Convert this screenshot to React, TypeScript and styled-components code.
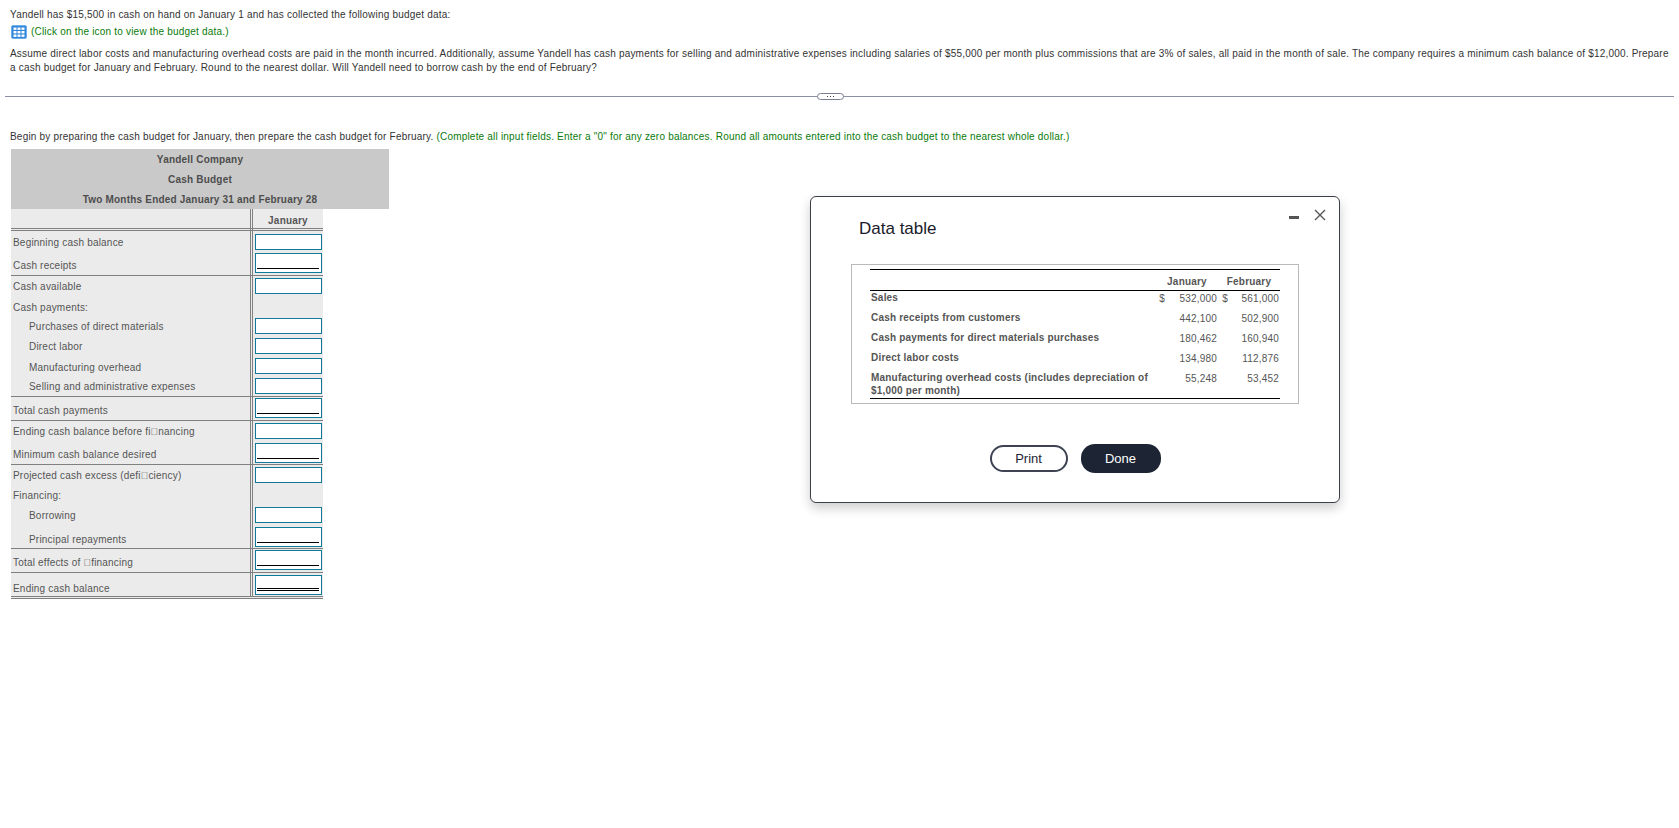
import React from "react";
import styled, { createGlobalStyle } from "styled-components";

const Global = createGlobalStyle`
  html, body { margin: 0; padding: 0; background: #fff; }
  body { font-family: "Liberation Sans", Arial, sans-serif; font-size: 10px; letter-spacing: 0.2px; color: #333; }
`;

const Page = styled.div`
  position: relative;
  width: 1679px;
  height: 828px;
  overflow: hidden;
  padding-top: 8px;
  box-sizing: border-box;
`;

const Para = styled.p<{ $top: number; $color?: string }>`
  margin: ${(p) => p.$top}px 0 0 10px;
  width: 1660px;
  line-height: 14px;
  color: ${(p) => p.$color || "#333"};
`;

const IconLine = styled.div`
  margin: 3px 0 0 11px;
  height: 14px;
  display: flex;
  align-items: center;
  gap: 4px;
  line-height: 14px;
  color: #0a7a0a;
`;

const Divider = styled.div`
  position: relative;
  margin: 21px 5px 0 5px;
  height: 1px;
  background: #8b90a3;
`;

const MoreButton = styled.div`
  position: absolute;
  left: 812px;
  top: -3px;
  width: 27px;
  height: 7px;
  box-sizing: border-box;
  background: #fff;
  border: 1px solid #7a7f92;
  border-radius: 4px;
  display: flex;
  justify-content: center;
  align-items: center;
  gap: 2px;
`;

const MoreDot = styled.span`
  width: 1px;
  height: 1px;
  background: #444;
`;

const Intro = styled.p`
  margin: 33px 0 0 10px;
  line-height: 14px;
  color: #333;
`;

const Green = styled.span`
  color: #0a7a0a;
`;

const Budget = styled.div`
  margin: 5px 0 0 11px;
  width: 378px;
  color: #555;
`;

const TitleBand = styled.div`
  background: #c9c9c9;
  height: 60px;
  width: 378px;
  color: #4d4d4d;
`;

const TitleLine = styled.div`
  height: 20px;
  line-height: 22px;
  text-align: center;
  font-weight: bold;
`;

const Row = styled.div<{ $h: number; $line?: "single" | "double" }>`
  display: grid;
  grid-template-columns: 239px 3px 70px;
  width: 312px;
  height: ${(p) => p.$h}px;
  background: #ebebeb;
  box-sizing: border-box;
  border-bottom: ${(p) =>
    p.$line === "double" ? "3px double #808080" : p.$line === "single" ? "1px solid #808080" : "0"};
`;

const Label = styled.div<{ $indent?: boolean; $top: number }>`
  padding: ${(p) => p.$top}px 0 0 ${(p) => (p.$indent ? 18 : 2)}px;
  line-height: 14px;
  color: #555;
`;

const Rule = styled.div`
  border-left: 3px double #808080;
`;

const HeadCell = styled.div`
  text-align: center;
  font-weight: bold;
  line-height: 23px;
  color: #555;
`;

const InputWrap = styled.div`
  padding: 0 0 0 2px;
`;

const Cell = styled.div<{ $top: number; $h: number; $under?: "single" | "double" }>`
  position: relative;
  margin-top: ${(p) => p.$top}px;
  width: 67px;
  height: ${(p) => p.$h}px;
  box-sizing: border-box;
  background: #fff;
  border: 1px solid #107a9a;
  &::after {
    content: "";
    display: ${(p) => (p.$under ? "block" : "none")};
    position: absolute;
    left: 1px;
    right: 2px;
    bottom: 3px;
    border-bottom: ${(p) => (p.$under === "double" ? "3px double #000" : "1px solid #000")};
  }
`;

const Modal = styled.div`
  position: absolute;
  left: 810px;
  top: 196px;
  width: 530px;
  height: 307px;
  box-sizing: border-box;
  background: #fff;
  border: 1px solid #3b3f46;
  border-radius: 6px;
  box-shadow: 0 5px 12px rgba(0, 0, 0, 0.2);
`;

const ModalTitle = styled.h2`
  margin: 0;
  padding: 22px 0 0 48px;
  height: 67px;
  box-sizing: border-box;
  font-size: 17px;
  font-weight: normal;
  letter-spacing: 0;
  line-height: 20px;
  color: #1a1a2a;
`;

const WindowControls = styled.div`
  position: absolute;
  left: 478px;
  top: 12px;
  display: flex;
  align-items: center;
  gap: 14px;
  color: #555;
`;

const DataBox = styled.div`
  margin-left: 40px;
  width: 448px;
  height: 140px;
  box-sizing: border-box;
  border: 1px solid #b9b9b9;
  padding: 4px 18px 0 18px;
`;

const DataGrid = styled.div`
  border-top: 1px solid #000;
  border-bottom: 1px solid #000;
  display: grid;
  grid-template-columns: 281px 15px 52px 11px 51px;
  grid-template-rows: 21px;
  grid-auto-rows: 20px;
  width: 410px;
  height: 128px;
  color: #555;
`;

const DataHead = styled.div<{ $span: number; $start: number; $pad?: number }>`
  grid-column: ${(p) => `${p.$start} / span ${p.$span}`};
  box-sizing: border-box;
  border-bottom: 1px solid #000;
  padding-left: ${(p) => p.$pad || 0}px;
  font-weight: bold;
  line-height: 24px;
  text-align: center;
`;

const DataLabel = styled.div<{ $wrap?: boolean }>`
  font-weight: bold;
  line-height: 13px;
  padding: 0 0 0 1px;
  width: 280px;
  box-sizing: border-box;
  white-space: ${(p) => (p.$wrap ? "normal" : "nowrap")};
`;

const DataNum = styled.div`
  text-align: right;
  line-height: 13px;
  padding: 1px 1px 0 0;
`;

const ButtonRow = styled.div`
  display: flex;
  justify-content: center;
  align-items: center;
  gap: 13px;
  margin: 40px 0 0 0;
`;

const PrintButton = styled.div`
  width: 78px;
  height: 27px;
  box-sizing: border-box;
  border: 2px solid #3d4352;
  border-radius: 14px;
  text-align: center;
  font-size: 13px;
  letter-spacing: 0;
  line-height: 23px;
  color: #1d2433;
`;

const DoneButton = styled.div`
  width: 80px;
  height: 29px;
  border-radius: 14px;
  background: #1d2433;
  color: #fff;
  text-align: center;
  font-size: 13px;
  letter-spacing: 0;
  line-height: 29px;
`;

type R = {
  label: React.ReactNode;
  indent?: boolean;
  h: number;
  textTop: number;
  line?: "single" | "double";
  input?: { top: number; h: number; under?: "single" | "double" };
};

const T = "\uE000";

const rows: R[] = [
  { label: "Beginning cash balance", h: 21, textTop: 5, input: { top: 3, h: 16 } },
  { label: "Cash receipts", h: 24, textTop: 7, line: "single", input: { top: 1, h: 20, under: "single" } },
  { label: "Cash available", h: 22, textTop: 4, input: { top: 2, h: 16 } },
  { label: "Cash payments:", h: 18, textTop: 3 },
  { label: "Purchases of direct materials", indent: true, h: 20, textTop: 4, input: { top: 2, h: 16 } },
  { label: "Direct labor", indent: true, h: 20, textTop: 4, input: { top: 2, h: 16 } },
  { label: "Manufacturing overhead", indent: true, h: 20, textTop: 5, input: { top: 2, h: 16 } },
  { label: "Selling and administrative expenses", indent: true, h: 21, textTop: 4, line: "single", input: { top: 2, h: 16 } },
  { label: "Total cash payments", h: 24, textTop: 7, line: "single", input: { top: 1, h: 20, under: "single" } },
  { label: `Ending cash balance before fi${T}nancing`, h: 21, textTop: 4, input: { top: 2, h: 16 } },
  { label: "Minimum cash balance desired", h: 23, textTop: 6, line: "single", input: { top: 1, h: 20, under: "single" } },
  { label: `Projected cash excess (defi${T}ciency)`, h: 22, textTop: 4, input: { top: 2, h: 16 } },
  { label: "Financing:", h: 18, textTop: 2 },
  { label: "Borrowing", indent: true, h: 21, textTop: 4, input: { top: 2, h: 16 } },
  { label: "Principal repayments", indent: true, h: 23, textTop: 7, line: "single", input: { top: 1, h: 20, under: "single" } },
  { label: `Total effects of ${T}financing`, h: 24, textTop: 7, line: "single", input: { top: 1, h: 20, under: "single" } },
  { label: "Ending cash balance", h: 26, textTop: 9, line: "double", input: { top: 2, h: 20, under: "double" } },
];

const data = [
  { label: "Sales", a: "532,000", b: "561,000", dollar: true },
  { label: "Cash receipts from customers", a: "442,100", b: "502,900" },
  { label: "Cash payments for direct materials purchases", a: "180,462", b: "160,940" },
  { label: "Direct labor costs", a: "134,980", b: "112,876" },
  { label: "Manufacturing overhead costs (includes depreciation of $1,000 per month)", a: "55,248", b: "53,452", wrap: true },
];

const GridIcon = () => (
  <svg width="16" height="14" viewBox="0 0 16 14">
    <rect x="0.5" y="0.5" width="15" height="13" rx="1.5" fill="#2f86dc" stroke="#6fb0ec" />
    {[2.5, 6, 9.5].map((y) =>
      [2.5, 6.5, 10.5].map((x) => <rect key={`${x}-${y}`} x={x} y={y} width="3" height="2.4" fill="#fff" />)
    )}
  </svg>
);

export default function App() {
  return (
    <Page>
      <Global />
      <Para $top={0}>Yandell has $15,500 in cash on hand on January 1 and has collected the following budget data:</Para>
      <IconLine>
        <GridIcon />
        <span>(Click on the icon to view the budget data.)</span>
      </IconLine>
      <Para $top={8}>
        Assume direct labor costs and manufacturing overhead costs are paid in the month incurred. Additionally, assume
        Yandell has cash payments for selling and administrative expenses including salaries of $55,000 per month plus
        commissions that are 3% of sales, all paid in the month of sale. The company requires a minimum cash balance of
        $12,000. Prepare a cash budget for January and February. Round to the nearest dollar. Will Yandell need to borrow
        cash by the end of February?
      </Para>
      <Divider>
        <MoreButton>
          <MoreDot />
          <MoreDot />
          <MoreDot />
        </MoreButton>
      </Divider>
      <Intro>
        Begin by preparing the cash budget for January, then prepare the cash budget for February.{" "}
        <Green>
          (Complete all input fields. Enter a "0" for any zero balances. Round all amounts entered into the cash budget to
          the nearest whole dollar.)
        </Green>
      </Intro>
      <Budget>
        <TitleBand>
          <TitleLine>Yandell Company</TitleLine>
          <TitleLine>Cash Budget</TitleLine>
          <TitleLine>Two Months Ended January 31 and February 28</TitleLine>
        </TitleBand>
        <Row $h={22} $line="double">
          <div />
          <Rule />
          <HeadCell>January</HeadCell>
        </Row>
        {rows.map((r, i) => (
          <Row key={i} $h={r.h} $line={r.line}>
            <Label $indent={r.indent} $top={r.textTop}>
              {r.label}
            </Label>
            <Rule />
            <InputWrap>{r.input && <Cell $top={r.input.top} $h={r.input.h} $under={r.input.under} />}</InputWrap>
          </Row>
        ))}
      </Budget>
      <Modal>
        <ModalTitle>Data table</ModalTitle>
        <WindowControls>
          <svg width="11" height="12" viewBox="0 0 11 12">
            <rect x="0" y="7" width="10" height="3" fill="#555" />
          </svg>
          <svg width="12" height="12" viewBox="0 0 12 12">
            <path d="M1 1 L11 11 M11 1 L1 11" stroke="#555" strokeWidth="1.4" fill="none" />
          </svg>
        </WindowControls>
        <DataBox>
          <DataGrid>
            <DataHead $start={1} $span={1} />
            <DataHead $start={2} $span={2} $pad={5}>
              January
            </DataHead>
            <DataHead $start={4} $span={2}>
              February
            </DataHead>
            {data.map((d) => (
              <React.Fragment key={d.label}>
                <DataLabel $wrap={d.wrap}>{d.label}</DataLabel>
                <DataNum>{d.dollar ? "$" : ""}</DataNum>
                <DataNum>{d.a}</DataNum>
                <DataNum>{d.dollar ? "$" : ""}</DataNum>
                <DataNum>{d.b}</DataNum>
              </React.Fragment>
            ))}
          </DataGrid>
        </DataBox>
        <ButtonRow>
          <PrintButton>Print</PrintButton>
          <DoneButton>Done</DoneButton>
        </ButtonRow>
      </Modal>
    </Page>
  );
}
